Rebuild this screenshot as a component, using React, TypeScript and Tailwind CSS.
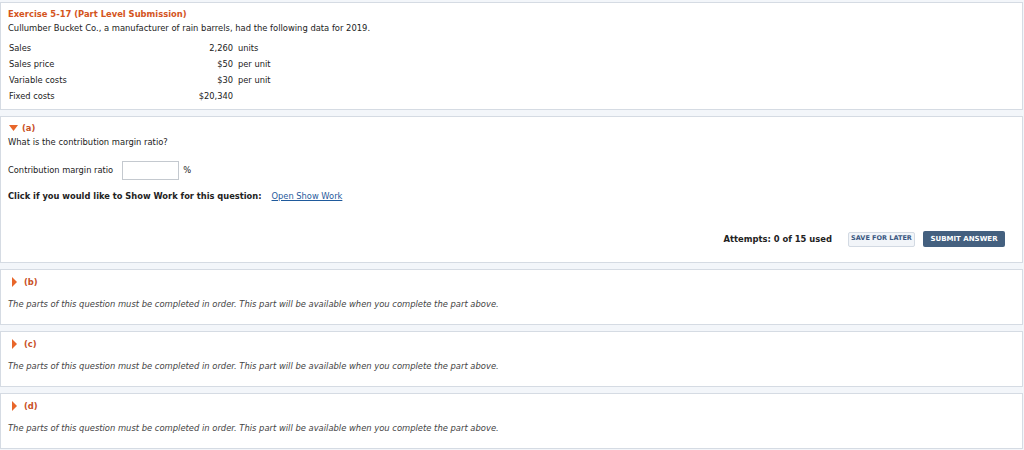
import React from "react";

const font = { fontFamily: '"DejaVu Sans", Verdana, sans-serif' };

function Locked({ label }: { label: string }) {
  return (
    <div className="bg-white border border-[#d5dbe3] mb-[6px] px-[7px] pt-[6px] pb-[14px]">
      <div className="flex items-center h-[12px] gap-[5px]">
        <svg width="8" height="10" viewBox="0 0 8 10" className="ml-[3px]">
          <polygon points="1,0 6,5 1,10" fill="#e8662a" />
        </svg>
        <span className="text-[8.4px] font-bold text-[#c8501f] leading-[12px]">({label})</span>
      </div>
      <div className="mt-[10px] text-[8.4px] leading-[12px] italic text-[#444]">
        The parts of this question must be completed in order. This part will be available when you complete the part above.
      </div>
    </div>
  );
}

export default function App() {
  const rows: [string, string, string][] = [
    ["Sales", "2,260", "units"],
    ["Sales price", "$50", "per unit"],
    ["Variable costs", "$30", "per unit"],
    ["Fixed costs", "$20,340", ""],
  ];
  return (
    <div className="w-[1024px] h-[450px] overflow-hidden bg-[#f3f6fa] pt-[2px] pr-[1px] text-[#222]" style={font}>
      <div className="bg-white border border-[#d5dbe3] mb-[6px] px-[7px] pt-[5px] pb-[5px]">
        <div className="text-[8.4px] font-bold text-[#d4541c] leading-[12px]">Exercise 5-17 (Part Level Submission)</div>
        <div className="mt-[2px] text-[8.4px] leading-[12px]">
          Cullumber Bucket Co., a manufacturer of rain barrels, had the following data for 2019.
        </div>
        <div className="mt-[6px]">
          {rows.map(([l, v, u]) => (
            <div key={l} className="flex h-[16px] items-center text-[8.3px]">
              <div className="w-[180px] pl-[1px]">{l}</div>
              <div className="w-[45px] text-right">{v}</div>
              <div className="ml-[5px]">{u}</div>
            </div>
          ))}
        </div>
      </div>

      <div className="bg-white border border-[#d5dbe3] mb-[6px] pl-[7px] pr-[17px] pt-[5px] pb-[15px]">
        <div className="flex items-center h-[12px] gap-[4px]">
          <svg width="9" height="6" viewBox="0 0 9 6" className="ml-[1px]">
            <polygon points="0,0 9,0 4.5,6" fill="#e8662a" />
          </svg>
          <span className="text-[8.4px] font-bold text-[#c8501f] leading-[12px]">(a)</span>
        </div>
        <div className="mt-[2px] text-[8.4px] leading-[12px]">What is the contribution margin ratio?</div>
        <div className="mt-[13px] flex items-center h-[19px] text-[8.3px]">
          <span>Contribution margin ratio</span>
          <div className="ml-[9px] w-[57px] h-[19px] border border-[#c4c9cf] bg-white" />
          <span className="ml-[4px]">%</span>
        </div>
        <div className="mt-[10px] flex items-center h-[12px] text-[8.3px]">
          <span className="font-bold">Click if you would like to Show Work for this question:</span>
          <span className="ml-[10px] text-[#1f5a9c] underline">Open Show Work</span>
        </div>
        <div className="mt-[29px] flex items-center justify-end h-[16px]">
          <span className="text-[8.4px] font-bold mr-[16px]">Attempts: 0 of 15 used</span>
          <div className="h-[15px] w-[67px] flex items-center justify-center rounded-[2px] border border-[#d3dae3] bg-[#f2f5f9] text-[6.5px] font-bold text-[#3a5882]">
            SAVE FOR LATER
          </div>
          <div className="ml-[8px] h-[16px] w-[82px] flex items-center justify-center rounded-[2px] bg-[#44607f] text-[7px] font-bold text-white">
            SUBMIT ANSWER
          </div>
        </div>
      </div>

      <Locked label="b" />
      <Locked label="c" />
      <Locked label="d" />
    </div>
  );
}
